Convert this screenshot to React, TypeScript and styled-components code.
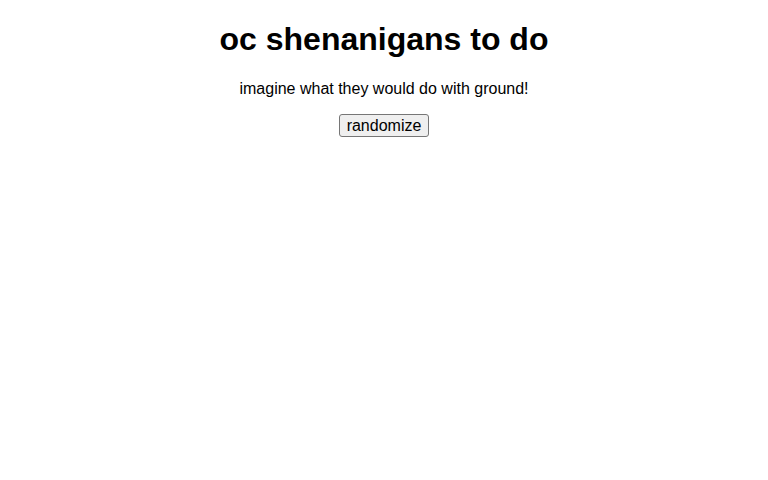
import React, { useState } from "react";
import styled, { createGlobalStyle } from "styled-components";

const GlobalStyle = createGlobalStyle`
  body {
    margin: 0;
    background: #fff;
    font-family: "Liberation Sans", Arial, sans-serif;
    color: #000;
  }
`;

const Page = styled.main`
  /* layout */
  text-align: center;
`;

const Title = styled.h1`
  font-size: 32px;
  font-weight: bold;
  margin: 21.44px 0;
`;

const Prompt = styled.p`
  font-size: 16px;
  margin: 16px 0;
`;

const RandomButton = styled.button`
  font-family: "Liberation Sans", Arial, sans-serif;
  font-size: 16px;
  line-height: 19px;
  padding: 1px 7px;
  background: #efefef;
  color: #000;
  border: 1px solid #767676;
  border-radius: 3px;
  cursor: pointer;
  &:hover {
    background: #e5e5e5;
  }
`;

const things = ["ground", "a spoon", "the moon", "a shovel", "bread"];

const App = () => {
  const [thing, setThing] = useState(things[0]);

  const randomize = () => {
    setThing(things[Math.floor(Math.random() * things.length)]);
  };

  return (
    <Page>
      <GlobalStyle />
      <Title>oc shenanigans to do</Title>
      <Prompt>imagine what they would do with {thing}!</Prompt>
      <RandomButton onClick={randomize}>randomize</RandomButton>
    </Page>
  );
};

export default App;
